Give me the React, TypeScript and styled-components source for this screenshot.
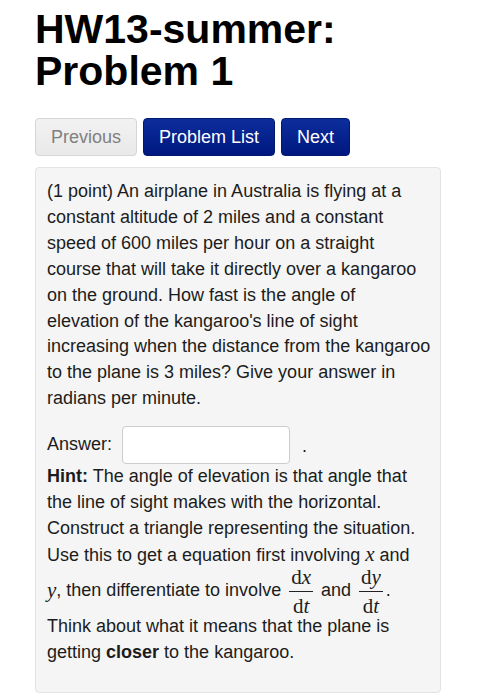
import styled, { createGlobalStyle } from "styled-components";

const GlobalStyle = createGlobalStyle`
    body {
        margin: 0;
        background: #ffffff;
        font-family: "Liberation Sans", Arial, sans-serif;
        color: #222222;
    }
`

const Page = styled.div`
    padding: 8px 36px 10px 35px;
`

const Title = styled.h1`
    margin: 0;
    font-size: 41px;
    line-height: 42px;
    font-weight: bold;
    color: #000000;
`

const NavBar = styled.div`
    display: flex;
    gap: 6px;
    margin-top: 26px;
    margin-bottom: 11px;
`

const NavButton = styled.div<{ $primary?: boolean }>`
    height: 38px;
    box-sizing: border-box;
    padding: 0 15px;
    display: flex;
    align-items: center;
    font-size: 18px;
    border-radius: 4px;
    border: 1px solid ${p => (p.$primary ? "#001a6e" : "#d6d6d6")};
    background: ${p => (p.$primary ? "linear-gradient(#0c2e9c, #001780)" : "linear-gradient(#f2f2f2, #e9e9e9)")};
    color: ${p => (p.$primary ? "#ffffff" : "#808080")};
`

const Panel = styled.div`
    width: 406px;
    box-sizing: border-box;
    background: #f5f5f5;
    border: 1px solid #e3e3e3;
    border-radius: 4px;
    padding: 11px 11px 26px 11px;
    font-size: 18px;
    line-height: 25.9px;
    color: #1c1c1c;
    white-space: nowrap;
`

const Para = styled.p`
    margin: 0;
`

const AnswerRow = styled.div`
    display: flex;
    align-items: center;
    margin-top: 14px;
`

const AnswerInput = styled.div`
    width: 168px;
    height: 38px;
    box-sizing: border-box;
    margin-left: 10px;
    background: #ffffff;
    border: 1px solid #cccccc;
    border-radius: 4px;
`

const Dot = styled.span`
    margin-left: 12px;
    margin-top: 4px;
`

const MathVar = styled.span`
    font-family: "Liberation Serif", "Times New Roman", serif;
    font-style: italic;
    font-size: 21px;
`

const Frac = styled.span<{ $last?: boolean }>`
    display: inline-flex;
    flex-direction: column;
    align-items: center;
    vertical-align: middle;
    margin: 0 ${p => (p.$last ? "3px" : "8px")} 0 8px;
    font-family: "Liberation Serif", "Times New Roman", serif;
    font-size: 21px;
    line-height: 24px;
`

const FracTop = styled.span`
    padding: 0 2px 2px;
    border-bottom: 1.5px solid #222222;
`

const FracBottom = styled.span`
    padding: 2px 2px 0;
`

const FracLine = styled.div`
    height: 45px;
    display: flex;
    align-items: center;
    white-space: pre;
`

const Fraction = ({ top, last }: { top: string; last?: boolean }) => (
    <Frac $last={last}>
        <FracTop>d<i>{top}</i></FracTop>
        <FracBottom>d<i>t</i></FracBottom>
    </Frac>
)

const App = () => {
    return (
        <Page>
            <GlobalStyle />
            <Title>HW13-summer:<br />Problem 1</Title>
            <NavBar>
                <NavButton>Previous</NavButton>
                <NavButton $primary>Problem List</NavButton>
                <NavButton $primary>Next</NavButton>
            </NavBar>
            <Panel>
                <Para>
                    (1 point) An airplane in Australia is flying at a<br />
                    constant altitude of 2 miles and a constant<br />
                    speed of 600 miles per hour on a straight<br />
                    course that will take it directly over a kangaroo<br />
                    on the ground. How fast is the angle of<br />
                    elevation of the kangaroo's line of sight<br />
                    increasing when the distance from the kangaroo<br />
                    to the plane is 3 miles? Give your answer in<br />
                    radians per minute.
                </Para>
                <AnswerRow>
                    Answer:
                    <AnswerInput />
                    <Dot>.</Dot>
                </AnswerRow>
                <Para>
                    <b>Hint:</b> The angle of elevation is that angle that<br />
                    the line of sight makes with the horizontal.<br />
                    Construct a triangle representing the situation.<br />
                    Use this to get a equation first involving <MathVar>x</MathVar> and
                </Para>
                <FracLine>
                    <MathVar>y</MathVar>, then differentiate to involve<Fraction top="x" />and<Fraction top="y" last />.
                </FracLine>
                <Para>
                    Think about what it means that the plane is<br />
                    getting <b>closer</b> to the kangaroo.
                </Para>
            </Panel>
        </Page>
    );
}

export default App;
